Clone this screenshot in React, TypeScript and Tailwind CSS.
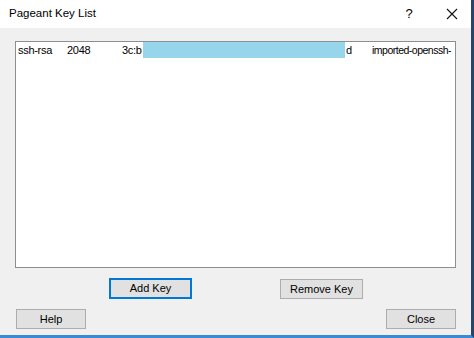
export default function App() {
  return (
    <div
      className="w-[474px] h-[338px] flex flex-col bg-[#f0f0f0] border-r-[3px] border-r-[#24466e] border-b-[3px] border-b-[#3b8ad6] overflow-hidden"
      style={{ fontFamily: '"Liberation Sans", Arial, sans-serif' }}
    >
      {/* Title bar */}
      <div className="h-[28px] bg-white flex items-center text-[11.5px] text-black">
        <span className="ml-[9px] flex-1">Pageant Key List</span>
        <span className="w-[14px] text-center mr-[30px] text-[13px]">?</span>
        <svg width="12" height="12" viewBox="0 0 12 12" className="mr-[13px]">
          <path d="M1 1 L11 11 M11 1 L1 11" stroke="#111" strokeWidth="1.1" />
        </svg>
      </div>

      {/* Key list */}
      <div className="mt-[13px] ml-[15px] w-[441px] h-[227px] bg-white border border-[#8a8f96] text-[11px] text-black tracking-[-0.3px] overflow-hidden">
        <div className="flex items-center h-[17px] relative whitespace-nowrap">
          <span className="absolute left-[2px]">ssh-rsa</span>
          <span className="absolute left-[51px]">2048</span>
          <span className="absolute left-[106px]">3c:b</span>
          <span className="absolute left-[127px] top-0 w-[202px] h-[16px] bg-[#97d6ea]" />
          <span className="absolute left-[330px]">d</span>
          <span className="absolute left-[356px] text-[10.5px] tracking-[-0.5px]">imported-openssh-</span>
        </div>
      </div>

      {/* Add / Remove */}
      <div className="flex mt-[10px] pl-[109px] gap-[88px] text-[11px] text-black">
        <button className="w-[83px] h-[21px] bg-[#e1e1e1] border border-[#0078d7] shadow-[inset_0_0_0_1px_#0078d7]">
          Add Key
        </button>
        <button className="w-[83px] h-[20px] mt-[1px] bg-[#e1e1e1] border border-[#adadad]">
          Remove Key
        </button>
      </div>

      {/* Help / Close */}
      <div className="flex justify-between mt-[10px] pl-[16px] pr-[15px] text-[11px] text-black">
        <button className="w-[70px] h-[20px] bg-[#e1e1e1] border border-[#adadad]">Help</button>
        <button className="w-[70px] h-[20px] bg-[#e1e1e1] border border-[#adadad]">Close</button>
      </div>
    </div>
  )
}
